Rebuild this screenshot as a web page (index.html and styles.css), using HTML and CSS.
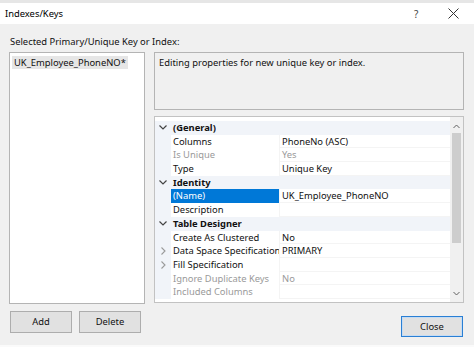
FILE: index.html
```html
<!DOCTYPE html>
<html lang="en">
  <head>
    <title>Indexes/Keys</title>
    <link rel="stylesheet" href="styles.css">
  </head>
  <body>
    <div class="dialog">
      <div class="titlebar">
        <div class="title">Indexes/Keys</div>
        <div class="help">?</div>
        <div class="close-x">
          <svg width="11" height="11" viewBox="0 0 11 11"><path d="M0.5 0.5 L10.5 10.5 M10.5 0.5 L0.5 10.5" stroke="#333" stroke-width="1" fill="none"/></svg>
        </div>
      </div>
      <div class="content">
        <div class="label">Selected Primary/Unique Key or Index:</div>
        <div class="columns">
          <div class="left">
            <div class="listbox">
              <div class="item">UK_Employee_PhoneNO*</div>
            </div>
            <div class="buttons">
              <div class="button">Add</div>
              <div class="button">Delete</div>
            </div>
          </div>
          <div class="right">
            <div class="description">Editing properties for new unique key or index.</div>
            <div class="grid">
              <div class="rows">
                <div class="row category">
                  <div class="gutter"><svg class="chev" width="8" height="5" viewBox="0 0 8 5"><path d="M0.5 0.5 L4 4 L7.5 0.5" stroke="#444" stroke-width="1.2" fill="none"/></svg></div>
                  <div class="name">(General)</div>
                </div>
                <div class="row">
                  <div class="gutter"></div>
                  <div class="name">Columns</div>
                  <div class="value">PhoneNo (ASC)</div>
                </div>
                <div class="row disabled">
                  <div class="gutter"></div>
                  <div class="name">Is Unique</div>
                  <div class="value">Yes</div>
                </div>
                <div class="row">
                  <div class="gutter"></div>
                  <div class="name">Type</div>
                  <div class="value">Unique Key</div>
                </div>
                <div class="row category">
                  <div class="gutter"><svg class="chev" width="8" height="5" viewBox="0 0 8 5"><path d="M0.5 0.5 L4 4 L7.5 0.5" stroke="#444" stroke-width="1.2" fill="none"/></svg></div>
                  <div class="name">Identity</div>
                </div>
                <div class="row">
                  <div class="gutter"></div>
                  <div class="name selected">(Name)</div>
                  <div class="value">UK_Employee_PhoneNO</div>
                </div>
                <div class="row">
                  <div class="gutter"></div>
                  <div class="name">Description</div>
                  <div class="value"></div>
                </div>
                <div class="row category">
                  <div class="gutter"><svg class="chev" width="8" height="5" viewBox="0 0 8 5"><path d="M0.5 0.5 L4 4 L7.5 0.5" stroke="#444" stroke-width="1.2" fill="none"/></svg></div>
                  <div class="name">Table Designer</div>
                </div>
                <div class="row">
                  <div class="gutter"></div>
                  <div class="name">Create As Clustered</div>
                  <div class="value">No</div>
                </div>
                <div class="row">
                  <div class="gutter"><svg class="chev" width="5" height="8" viewBox="0 0 5 8"><path d="M0.5 0.5 L4 4 L0.5 7.5" stroke="#9a9a9a" stroke-width="1.1" fill="none"/></svg></div>
                  <div class="name">Data Space Specification</div>
                  <div class="value">PRIMARY</div>
                </div>
                <div class="row">
                  <div class="gutter"><svg class="chev" width="5" height="8" viewBox="0 0 5 8"><path d="M0.5 0.5 L4 4 L0.5 7.5" stroke="#9a9a9a" stroke-width="1.1" fill="none"/></svg></div>
                  <div class="name">Fill Specification</div>
                  <div class="value"></div>
                </div>
                <div class="row disabled">
                  <div class="gutter"></div>
                  <div class="name">Ignore Duplicate Keys</div>
                  <div class="value">No</div>
                </div>
                <div class="row disabled">
                  <div class="gutter"></div>
                  <div class="name">Included Columns</div>
                  <div class="value"></div>
                </div>
              </div>
              <div class="scrollbar">
                <svg class="arrow" width="7" height="5" viewBox="0 0 7 5"><path d="M0.5 4 L3.5 1 L6.5 4" stroke="#606060" fill="none"/></svg>
                <div class="track"><div class="thumb"></div></div>
                <svg class="arrow" width="7" height="5" viewBox="0 0 7 5"><path d="M0.5 1 L3.5 4 L6.5 1" stroke="#606060" fill="none"/></svg>
              </div>
            </div>
            <div class="buttons end">
              <div class="button default">Close</div>
            </div>
          </div>
        </div>
      </div>
    </div>
  </body>
</html>
```

FILE: styles.css
```css
* {
  margin: 0;
  box-sizing: border-box;
}
body {
  font-family: "Noto Sans", "Open Sans", sans-serif;
  font-size: 9.4px;
  color: #111;
  background: #f0f0f0;
}
.dialog {
  width: 474px;
  height: 347px;
  background: #f0f0f0;
  border-bottom: 2px solid #fafafa;
}
.titlebar {
  height: 24px;
  background: #ffffff;
  border-top: 3px solid #e6e6e6;
  display: flex;
  align-items: center;
  padding-left: 5px;
}
.title {
  flex: 1;
  color: #000;
}
.help {
  width: 34px;
  color: #444;
  font-size: 10px;
}
.close-x {
  width: 26px;
  display: flex;
  align-items: center;
}
.content {
  padding: 11px 10px 0 9px;
}
.label {
  height: 17px;
  padding-left: 1px;
}
.columns {
  display: flex;
  gap: 9px;
}
.left {
  width: 136px;
}
.listbox {
  height: 252px;
  background: #ffffff;
  border: 1px solid #b4b4b4;
  padding: 3px 2px;
}
.item {
  display: inline-block;
  background: #e6e6e6;
  padding: 0 2px;
  height: 13px;
  line-height: 13px;
}
.buttons {
  display: flex;
  gap: 7px;
  margin-top: 7px;
  padding-left: 1px;
}
.buttons.end {
  justify-content: flex-end;
  margin-top: 13px;
  padding-right: 1px;
}
.button {
  width: 62px;
  height: 22px;
  line-height: 20px;
  text-align: center;
  background: #e1e1e1;
  border: 1px solid #adadad;
}
.button.default {
  height: 21px;
  line-height: 19px;
  border: 1px solid #2a7fd4;
  box-shadow: inset 0 0 0 1px #c6dcf3;
}
.right {
  width: 310px;
}
.description {
  height: 58px;
  border: 1px solid #b4b4b4;
  background: #f0f0f0;
  padding: 3px 4px;
  margin-bottom: 6px;
}
.grid {
  height: 187px;
  border: 1px solid #c2c2c2;
  background: #ffffff;
  display: flex;
  padding-top: 4px;
}
.rows {
  flex: 1;
}
.row {
  display: flex;
  height: 13.7px;
  line-height: 13.7px;
}
.gutter {
  width: 16px;
  background: #f1f4f9;
  display: flex;
  align-items: center;
  justify-content: center;
}
.name {
  width: 108px;
  padding-left: 2px;
  white-space: nowrap;
  overflow: hidden;
}
.value {
  flex: 1;
  padding-left: 2px;
  border-left: 1px solid #f4f4f4;
  border-bottom: 1px solid #f4f4f4;
  white-space: nowrap;
}
.category {
  background: #f1f4f9;
  font-weight: bold;
}
.category .name {
  width: auto;
}
.disabled {
  color: #9a9a9a;
}
.selected {
  background: #0078d7;
  color: #ffffff;
}
.scrollbar {
  width: 13px;
  margin-top: -4px;
  background: #f0f0f0;
  display: flex;
  flex-direction: column;
  align-items: center;
  padding: 7px 0 6px;
}
.arrow {
  flex: none;
}
.track {
  flex: 1;
  width: 100%;
  padding: 4px 2px 0;
}
.thumb {
  height: 110px;
  background: #cdcdcd;
}
```
